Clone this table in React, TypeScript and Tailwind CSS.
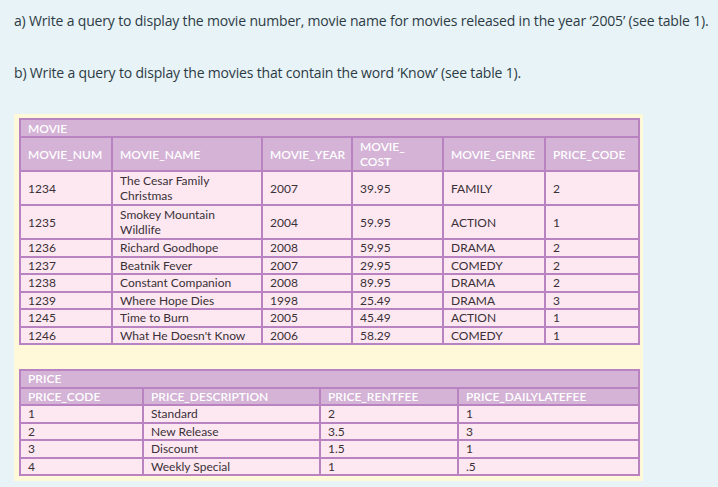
import React from "react";

const movies = [
  ["1234", "The Cesar Family Christmas", "2007", "39.95", "FAMILY", "2"],
  ["1235", "Smokey Mountain Wildlife", "2004", "59.95", "ACTION", "1"],
  ["1236", "Richard Goodhope", "2008", "59.95", "DRAMA", "2"],
  ["1237", "Beatnik Fever", "2007", "29.95", "COMEDY", "2"],
  ["1238", "Constant Companion", "2008", "89.95", "DRAMA", "2"],
  ["1239", "Where Hope Dies", "1998", "25.49", "DRAMA", "3"],
  ["1245", "Time to Burn", "2005", "45.49", "ACTION", "1"],
  ["1246", "What He Doesn't Know", "2006", "58.29", "COMEDY", "1"],
];

const prices = [
  ["1", "Standard", "2", "1"],
  ["2", "New Release", "3.5", "3"],
  ["3", "Discount", "1.5", "1"],
  ["4", "Weekly Special", "1", ".5"],
];

const th = "border-2 border-[#b983c2] px-[7px] text-left font-semibold text-white align-middle leading-[15px]";
const td = "border-2 border-[#b983c2] px-[7px] text-left text-[#3a3036] align-middle leading-[15px]";

export default function App() {
  return (
    <div className="w-[718px] h-[487px] bg-[#e7f3f6] font-['Lato',sans-serif] overflow-hidden">
      <div className="px-[14px] pt-[11px] text-[14px] text-[#2d3b45] font-['Open_Sans',sans-serif] tracking-[-0.17px]">
        <p className="h-[19px] leading-[19px] whitespace-nowrap">
          a) Write a query to display the movie number, movie name for movies released in the year ‘2005’ (see table 1).
        </p>
        <p className="mt-[33px] h-[19px] leading-[19px] whitespace-nowrap">
          b) Write a query to display the movies that contain the word ‘Know’ (see table 1).
        </p>
      </div>

      <div className="ml-[14px] mt-[32px] w-[629px] bg-[#fff9d9] pl-[5px] pt-[4px] pb-[5px]">
        <table className="border-collapse w-[619px] text-[12px] table-fixed">
          <colgroup>
            <col className="w-[92px]" />
            <col className="w-[150px]" />
            <col className="w-[90px]" />
            <col className="w-[91px]" />
            <col className="w-[102px]" />
            <col className="w-[94px]" />
          </colgroup>
          <thead className="bg-[#d4b3d6]">
            <tr className="h-[18px]">
              <th colSpan={6} className={th}>MOVIE</th>
            </tr>
            <tr className="h-[34px]">
              <th className={th}>MOVIE_NUM</th>
              <th className={th}>MOVIE_NAME</th>
              <th className={th}>MOVIE_YEAR</th>
              <th className={th}>MOVIE_<br />COST</th>
              <th className={th}>MOVIE_GENRE</th>
              <th className={th}>PRICE_CODE</th>
            </tr>
          </thead>
          <tbody className="bg-[#fde8f2]">
            {movies.map((m, i) => (
              <tr key={m[0]} className={i < 2 ? "h-[34px]" : "h-[17.5px]"}>
                {m.map((c, j) => (
                  <td key={j} className={td}>{c}</td>
                ))}
              </tr>
            ))}
          </tbody>
        </table>

        <table className="mt-[24px] border-collapse w-[619px] text-[12px] table-fixed">
          <colgroup>
            <col className="w-[123px]" />
            <col className="w-[177px]" />
            <col className="w-[138px]" />
            <col className="w-[181px]" />
          </colgroup>
          <thead className="bg-[#d4b3d6]">
            <tr className="h-[17.5px]">
              <th colSpan={4} className={th}>PRICE</th>
            </tr>
            <tr className="h-[17.5px]">
              <th className={th}>PRICE_CODE</th>
              <th className={th}>PRICE_DESCRIPTION</th>
              <th className={th}>PRICE_RENTFEE</th>
              <th className={th}>PRICE_DAILYLATEFEE</th>
            </tr>
          </thead>
          <tbody className="bg-[#fde8f2]">
            {prices.map((p) => (
              <tr key={p[0]} className="h-[17.5px]">
                {p.map((c, j) => (
                  <td key={j} className={td}>{c}</td>
                ))}
              </tr>
            ))}
          </tbody>
        </table>
      </div>
    </div>
  );
}
